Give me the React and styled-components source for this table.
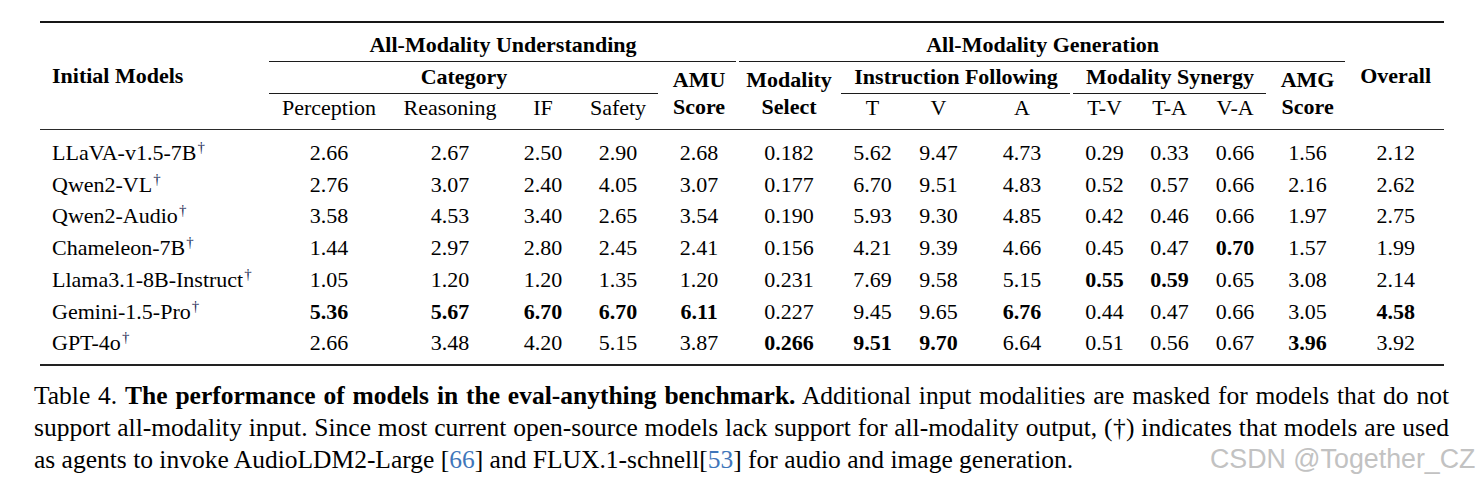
import React from "react";
import styled, { createGlobalStyle, css } from "styled-components";

const GlobalStyle = createGlobalStyle`
  html, body { margin: 0; padding: 0; background: #ffffff; }
  body { font-family: "Liberation Serif", "Times New Roman", serif; color: #000; }
`;

const Page = styled.div`
  position: relative;
  width: 1480px;
  height: 486px;
  padding-top: 21px;
  box-sizing: border-box;
  overflow: hidden;
  background: #fff;
`;

const Table = styled.table`
  margin-left: 40px;
  width: 1404px;
  table-layout: fixed;
  border-collapse: separate;
  border-spacing: 0;
  border-top: 2px solid #161616;
  border-bottom: 2px solid #222;
  font-size: 22px;
  color: #000;
`;

const rowStyles = {
  1: css`padding: 6px 0 1px; line-height: 32px;`,
  2: css`padding: 0 0 2px; line-height: 30px;`,
  3: css`padding: 0 0 7px; line-height: 28px;`,
};

const HeadCell = styled.th`
  position: relative;
  padding: 0;
  text-align: center;
  vertical-align: top;
  white-space: nowrap;
  font-weight: ${(p) => (p.$light ? 400 : 700)};
  ${(p) => rowStyles[p.$row]}
  ${(p) =>
    p.$rule &&
    css`
      &::after {
        content: "";
        position: absolute;
        left: 1px;
        right: 2px;
        bottom: 0;
        height: 1px;
        background: #1c1c1c;
      }
    `}
`;

const CornerCell = styled.th`
  padding: 37px 0 0 12px;
  line-height: 32px;
  text-align: ${(p) => (p.$center ? "center" : "left")};
  vertical-align: top;
  font-weight: 700;
  white-space: nowrap;
  ${(p) => p.$center && css`padding-left: 0;`}
`;

const StackCell = styled.th`
  padding: 4px 0 0;
  line-height: 27px;
  text-align: center;
  vertical-align: top;
  font-weight: 700;
  white-space: nowrap;
`;

const BodyRow = styled.tr`
  &:first-child td {
    border-top: 1px solid #2a2a2a;
    padding-top: 7px;
  }
  &:last-child td {
    padding-bottom: 5px;
  }
`;

const Cell = styled.td`
  padding: 0;
  line-height: 31.7px;
  text-align: center;
  white-space: nowrap;
  font-weight: ${(p) => (p.$bold ? 700 : 400)};
`;

const ModelCell = styled(Cell)`
  text-align: left;
  padding-left: 12px;
`;

const Dagger = styled.sup`
  font-size: 15px;
  line-height: 0;
  vertical-align: 8px;
  margin-left: 1px;
  color: #1d2a55;
`;

const Caption = styled.div`
  margin: 14px 0 0 34px;
  width: 1415px;
  font-size: 25.5px;
  line-height: 32px;
  color: #000;
`;

const CaptionLine = styled.div`
  text-align: ${(p) => (p.$justify ? "justify" : "left")};
  text-align-last: ${(p) => (p.$justify ? "justify" : "left")};
`;

const Strong = styled.b`
  font-weight: 700;
`;

const Cite = styled.span`
  color: #3f76ba;
`;

const Watermark = styled.div`
  position: absolute;
  left: 1210px;
  top: 446px;
  font-family: "Liberation Sans", Arial, sans-serif;
  font-size: 26.8px;
  line-height: 27px;
  color: #c2c2c2;
  white-space: nowrap;
  pointer-events: none;
`;

const widths = [228, 122, 120, 66, 84, 78, 102, 65, 67, 100, 65, 65, 66, 79, 97];

const rows = [
  ["LLaVA-v1.5-7B", ["2.66", "2.67", "2.50", "2.90", "2.68", "0.182", "5.62", "9.47", "4.73", "0.29", "0.33", "0.66", "1.56", "2.12"], []],
  ["Qwen2-VL", ["2.76", "3.07", "2.40", "4.05", "3.07", "0.177", "6.70", "9.51", "4.83", "0.52", "0.57", "0.66", "2.16", "2.62"], []],
  ["Qwen2-Audio", ["3.58", "4.53", "3.40", "2.65", "3.54", "0.190", "5.93", "9.30", "4.85", "0.42", "0.46", "0.66", "1.97", "2.75"], []],
  ["Chameleon-7B", ["1.44", "2.97", "2.80", "2.45", "2.41", "0.156", "4.21", "9.39", "4.66", "0.45", "0.47", "0.70", "1.57", "1.99"], [11]],
  ["Llama3.1-8B-Instruct", ["1.05", "1.20", "1.20", "1.35", "1.20", "0.231", "7.69", "9.58", "5.15", "0.55", "0.59", "0.65", "3.08", "2.14"], [9, 10]],
  ["Gemini-1.5-Pro", ["5.36", "5.67", "6.70", "6.70", "6.11", "0.227", "9.45", "9.65", "6.76", "0.44", "0.47", "0.66", "3.05", "4.58"], [0, 1, 2, 3, 4, 8, 13]],
  ["GPT-4o", ["2.66", "3.48", "4.20", "5.15", "3.87", "0.266", "9.51", "9.70", "6.64", "0.51", "0.56", "0.67", "3.96", "3.92"], [5, 6, 7, 12]],
];

export default function App() {
  return (
    <>
      <GlobalStyle />
      <Page>
        <Table>
          <colgroup>
            {widths.map((w, i) => (
              <col key={i} style={{ width: w }} />
            ))}
          </colgroup>
          <thead>
            <tr>
              <CornerCell rowSpan={3}>Initial Models</CornerCell>
              <HeadCell $row={1} colSpan={5} $rule>
                All-Modality Understanding
              </HeadCell>
              <HeadCell $row={1} colSpan={8} $rule>
                All-Modality Generation
              </HeadCell>
              <CornerCell rowSpan={3} $center>
                Overall
              </CornerCell>
            </tr>
            <tr>
              <HeadCell $row={2} colSpan={4} $rule>
                Category
              </HeadCell>
              <StackCell rowSpan={2}>
                AMU
                <br />
                Score
              </StackCell>
              <StackCell rowSpan={2}>
                Modality
                <br />
                Select
              </StackCell>
              <HeadCell $row={2} colSpan={3} $rule>
                Instruction Following
              </HeadCell>
              <HeadCell $row={2} colSpan={3} $rule>
                Modality Synergy
              </HeadCell>
              <StackCell rowSpan={2}>
                AMG
                <br />
                Score
              </StackCell>
            </tr>
            <tr>
              {["Perception", "Reasoning", "IF", "Safety", "T", "V", "A", "T-V", "T-A", "V-A"].map((h) => (
                <HeadCell key={h} $row={3} $light>
                  {h}
                </HeadCell>
              ))}
            </tr>
          </thead>
          <tbody>
            {rows.map(([name, vals, bold]) => (
              <BodyRow key={name}>
                <ModelCell>
                  {name}
                  <Dagger>†</Dagger>
                </ModelCell>
                {vals.map((v, i) => (
                  <Cell key={i} $bold={bold.includes(i)}>
                    {v}
                  </Cell>
                ))}
              </BodyRow>
            ))}
          </tbody>
        </Table>
        <Caption>
          <CaptionLine $justify>
            Table 4. <Strong>The performance of models in the eval-anything benchmark.</Strong> Additional input
            modalities are masked for models that do not
          </CaptionLine>
          <CaptionLine $justify>
            support all-modality input. Since most current open-source models lack support for all-modality output, (†)
            indicates that models are used
          </CaptionLine>
          <CaptionLine>
            as agents to invoke AudioLDM2-Large [<Cite>66</Cite>] and FLUX.1-schnell[<Cite>53</Cite>] for audio and
            image generation.
          </CaptionLine>
        </Caption>
        <Watermark>CSDN @Together_CZ</Watermark>
      </Page>
    </>
  );
}
